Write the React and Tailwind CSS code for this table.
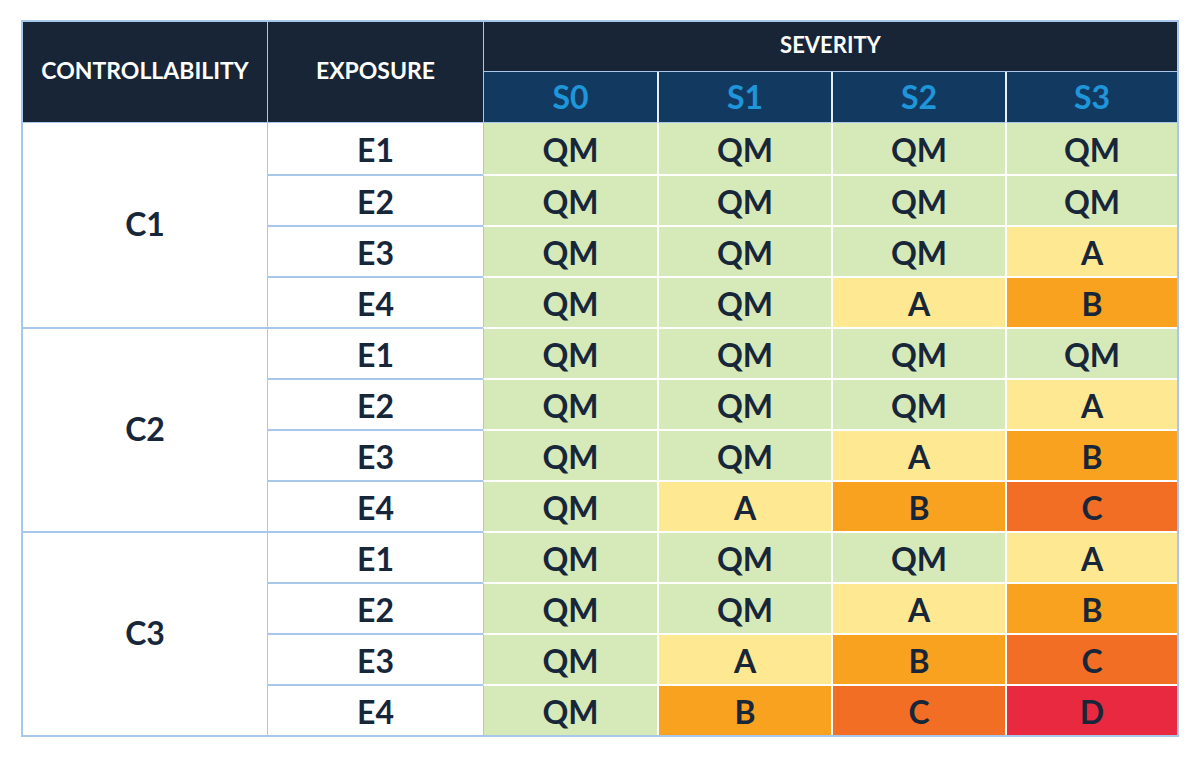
import React from 'react';

const rows = [
  { c: 'C1', cells: [['QM', 'QM', 'QM', 'QM'], ['QM', 'QM', 'QM', 'QM'], ['QM', 'QM', 'QM', 'A'], ['QM', 'QM', 'A', 'B']] },
  { c: 'C2', cells: [['QM', 'QM', 'QM', 'QM'], ['QM', 'QM', 'QM', 'A'], ['QM', 'QM', 'A', 'B'], ['QM', 'A', 'B', 'C']] },
  { c: 'C3', cells: [['QM', 'QM', 'QM', 'A'], ['QM', 'QM', 'A', 'B'], ['QM', 'A', 'B', 'C'], ['QM', 'B', 'C', 'D']] },
];

const levelBg = {
  QM: 'bg-[#d5e9b9]',
  A: 'bg-[#fee891]',
  B: 'bg-[#f8a21f]',
  C: 'bg-[#f26e24]',
  D: 'bg-[#e9293f]',
};

export default function App() {
  return (
    <div className="min-h-[764px] bg-white pt-[20px] pl-[21px] font-['Lato','Noto_Sans',sans-serif]">
      <div className="w-[1158px] border-2 border-[#a8c7ea] grid grid-cols-[244px_216px_174px_174px_174px_1fr] grid-rows-[50px_51px_repeat(12,51px)]">
        {/* header */}
        <div className="row-span-2 bg-[#172536] text-white font-bold text-[23px] flex items-center justify-center border-b border-[#a8c7ea] pb-[4px]">
          CONTROLLABILITY
        </div>
        <div className="row-span-2 bg-[#172536] text-white font-bold text-[23px] flex items-center justify-center border-l border-b border-[#a8c7ea] pb-[4px]">
          EXPOSURE
        </div>
        <div className="col-span-4 bg-[#172536] text-white font-bold text-[22px] flex items-center justify-center border-l border-b border-[#a8c7ea] pb-[4px]">
          SEVERITY
        </div>
        {['S0', 'S1', 'S2', 'S3'].map((s, i) => (
          <div
            key={s}
            className={`bg-[#123a60] text-[#1f96da] font-bold text-[32px] flex items-center justify-center border-b border-[#a8c7ea] ${i === 0 ? 'border-l border-l-[#a8c7ea]' : 'border-l-2 border-l-[#e6eef6]'}`}
          >
            {s}
          </div>
        ))}

        {/* body */}
        {rows.map((group, gi) => (
          <React.Fragment key={group.c}>
            <div
              className={`row-span-4 bg-white text-[#18263a] font-bold text-[32px] flex items-center justify-center pb-[3px] ${gi > 0 ? 'border-t-2 border-[#a8c7ea]' : ''}`}
            >
              {group.c}
            </div>
            {group.cells.map((line, ei) => (
              <React.Fragment key={ei}>
                <div
                  className={`bg-white text-[#18263a] font-bold text-[32px] flex items-center justify-center pt-[2px] border-l border-[#a8c7ea] ${gi > 0 || ei > 0 ? 'border-t-2' : ''}`}
                >
                  E{ei + 1}
                </div>
                {line.map((v, si) => (
                  <div
                    key={si}
                    className={`${levelBg[v]} text-[#18263a] font-bold text-[32px] flex items-center justify-center pt-[2px] ${si === 0 ? 'border-l border-l-[#a8c7ea]' : 'border-l-2 border-l-white'} ${gi > 0 || ei > 0 ? 'border-t-2 border-t-white' : ''}`}
                  >
                    {v}
                  </div>
                ))}
              </React.Fragment>
            ))}
          </React.Fragment>
        ))}
      </div>
    </div>
  );
}
